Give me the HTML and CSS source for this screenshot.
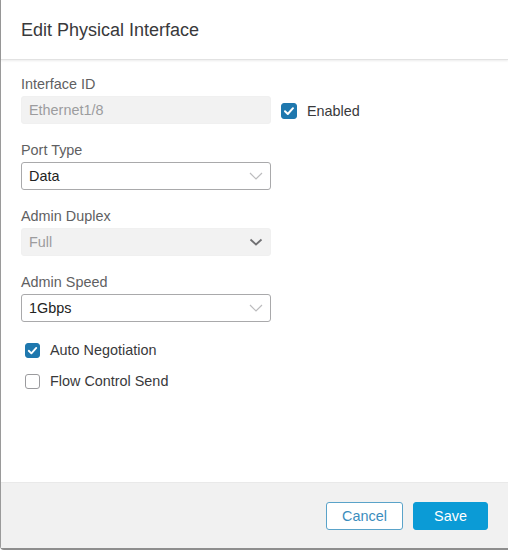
FILE: index.html
```html
<!DOCTYPE html>
<html>
<head>
<meta charset="utf-8">
<link rel="stylesheet" href="styles.css">
</head>
<body>
<div class="dialog">
  <div class="header"><h1 class="title">Edit Physical Interface</h1></div>
  <div class="body">
    <div class="group">
      <div class="label">Interface ID</div>
      <div class="id-row">
        <div class="field disabled">Ethernet1/8</div>
        <label class="check-row inline">
          <span class="box checked"><svg viewBox="0 0 16 16" width="16" height="16"><path d="M4 8.3 L6.8 11 L12 5.2" fill="none" stroke="#fff" stroke-width="2" stroke-linecap="round" stroke-linejoin="round"/></svg></span>
          <span class="check-text">Enabled</span>
        </label>
      </div>
    </div>
    <div class="group">
      <div class="label">Port Type</div>
      <div class="field select">Data<svg class="chev light" viewBox="0 0 14 8" width="14" height="8"><path d="M1 1 L7 7 L13 1" fill="none" stroke="currentColor" stroke-width="1.2"/></svg></div>
    </div>
    <div class="group">
      <div class="label">Admin Duplex</div>
      <div class="field select disabled">Full<svg class="chev dark" viewBox="0 0 14 8" width="14" height="8"><path d="M1.5 1.5 L7 6.5 L12.5 1.5" fill="none" stroke="currentColor" stroke-width="1.8"/></svg></div>
    </div>
    <div class="group">
      <div class="label">Admin Speed</div>
      <div class="field select">1Gbps<svg class="chev light" viewBox="0 0 14 8" width="14" height="8"><path d="M1 1 L7 7 L13 1" fill="none" stroke="currentColor" stroke-width="1.2"/></svg></div>
    </div>
    <div class="checks">
      <label class="check-row">
        <span class="box checked small"><svg viewBox="0 0 16 16" width="15" height="15"><path d="M4 8.3 L6.8 11 L12 5.2" fill="none" stroke="#fff" stroke-width="2" stroke-linecap="round" stroke-linejoin="round"/></svg></span>
        <span class="check-text">Auto Negotiation</span>
      </label>
      <label class="check-row">
        <span class="box small"></span>
        <span class="check-text">Flow Control Send</span>
      </label>
    </div>
  </div>
  <div class="footer">
    <button class="btn cancel">Cancel</button>
    <button class="btn save">Save</button>
  </div>
</div>
</body>
</html>
```
FILE: styles.css
```css
html, body {
  margin: 0;
  padding: 0;
  background: #ffffff;
}
body {
  font-family: "Liberation Sans", Arial, sans-serif;
  width: 508px;
  height: 551px;
  overflow: hidden;
}
.dialog {
  box-sizing: border-box;
  width: 508px;
  height: 550px;
  border-left: 1px solid #9a9a9a;
  border-bottom: 2px solid #8e8e8e;
  border-bottom-left-radius: 4px;
  display: flex;
  flex-direction: column;
  background: #fff;
}
.header {
  height: 60px;
  box-sizing: border-box;
  display: flex;
  align-items: center;
  padding-left: 20px;
  border-bottom: 1px solid #e2e2e2;
  box-shadow: 0 1px 2px rgba(0,0,0,0.08);
}
.title {
  margin: 0;
  font-size: 18px;
  font-weight: normal;
  color: #39393b;
  padding-top: 2px;
}
.body {
  flex: 1;
  padding: 16px 0 0 20px;
  display: flex;
  flex-direction: column;
  gap: 18px;
}
.group {
  display: flex;
  flex-direction: column;
  gap: 3px;
}
.label {
  font-size: 14.4px;
  line-height: 17px;
  color: #5f5f62;
}
.id-row {
  display: flex;
  align-items: center;
  gap: 10px;
}
.field {
  box-sizing: border-box;
  width: 250px;
  height: 28px;
  border: 1px solid #a9a9ab;
  border-radius: 3px;
  padding: 0 7px;
  display: flex;
  align-items: center;
  font-size: 14.4px;
  color: #222;
  background: #fff;
}
.field.disabled {
  background: #f2f2f2;
  border-color: #f0f0f0;
  color: #9c9c9e;
}
.select {
  justify-content: space-between;
  padding-right: 7px;
}
.chev.light { color: #bcbcbe; }
.chev.dark { color: #707073; }
.check-row {
  display: flex;
  align-items: center;
  gap: 10px;
  height: 20px;
}
.inline { padding-top: 1px; }
.box {
  box-sizing: border-box;
  width: 16px;
  height: 16px;
  border-radius: 3px;
  border: 1px solid #9b9b9e;
  background: #fff;
  display: flex;
  align-items: center;
  justify-content: center;
}
.box.small {
  width: 15px;
  height: 15px;
}
.box.checked {
  background: #1f78ae;
  border-color: #1f78ae;
}
.box svg { display: block; flex: none; }
.check-text {
  font-size: 14.4px;
  color: #39393b;
}
.checks {
  display: flex;
  flex-direction: column;
  gap: 11px;
  padding-left: 4px;
}
.footer {
  height: 66px;
  box-sizing: border-box;
  background: #f1f1f1;
  border-top: 1px solid #e9e9e9;
  display: flex;
  justify-content: flex-end;
  align-items: flex-start;
  padding: 19px 20px 0 0;
  gap: 10px;
}
.btn {
  font-family: "Liberation Sans", Arial, sans-serif;
  font-size: 14.4px;
  height: 28px;
  border-radius: 3px;
  padding: 0;
  cursor: pointer;
}
.cancel {
  width: 77px;
  background: #fff;
  border: 1px solid #5aa3c9;
  color: #3b8dbd;
}
.save {
  width: 75px;
  background: #0b9bd6;
  border: 1px solid #0b9bd6;
  color: #fff;
}
```
